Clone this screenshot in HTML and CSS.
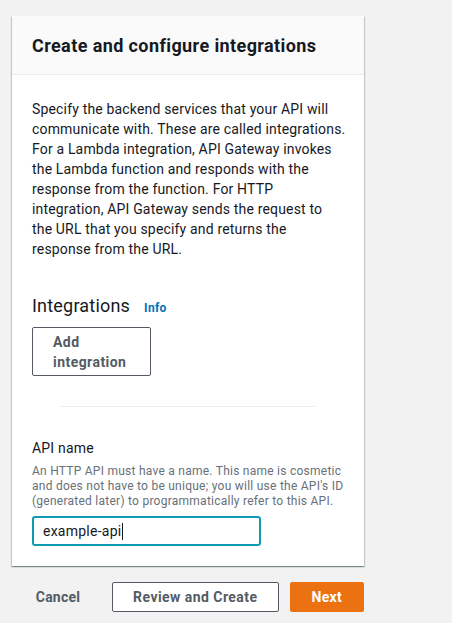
FILE: index.html
```html
<!DOCTYPE html>
<html>
<head>
<meta charset="utf-8">
<link rel="stylesheet" href="styles.css">
</head>
<body>
<div class="page">
  <div class="card">
    <div class="card-header">
      <h2 class="title">Create and configure integrations</h2>
    </div>
    <div class="card-body">
      <p class="intro">Specify the backend services that your API will communicate with. These are called integrations. For a Lambda integration, API Gateway invokes the Lambda function and responds with the response from the function. For HTTP integration, API Gateway sends the request to the URL that you specify and returns the response from the URL.</p>
      <div class="section-head">
        <span class="section-title">Integrations</span>
        <a class="info">Info</a>
      </div>
      <button class="btn-outline add">Add<br>integration</button>
      <hr class="divider">
      <div class="field">
        <div class="label">API name</div>
        <div class="desc">An HTTP API must have a name. This name is cosmetic and does not have to be unique; you will use the API's ID (generated later) to programmatically refer to this API.</div>
        <div class="input"><span class="value">example-api</span><span class="caret"></span></div>
      </div>
    </div>
  </div>
  <div class="actions">
    <button class="btn-link">Cancel</button>
    <button class="btn-outline">Review and Create</button>
    <button class="btn-primary">Next</button>
  </div>
</div>
</body>
</html>
```
FILE: styles.css
```css
html, body {
  margin: 0;
  padding: 0;
  background: #f2f2f2;
}
body {
  font-family: Roboto, "Liberation Sans", sans-serif;
  color: #16191f;
}
.page {
  padding: 16px 0 0 12px;
  width: 352px;
}
.card {
  background: #fff;
  box-shadow: 0 1px 1px rgba(0, 28, 36, 0.3), 1px 1px 1px rgba(0, 28, 36, 0.15), -1px 1px 1px rgba(0, 28, 36, 0.15);
}
.card-header {
  background: #fafafa;
  border-bottom: 1px solid #eaeded;
  padding: 15px 20px 13px;
}
.title {
  margin: 0;
  font-size: 18px;
  line-height: 30px;
  font-weight: 700;
  letter-spacing: 0.4px;
}
.card-body {
  padding: 24px 20px 20px;
}
.intro {
  margin: 0 -2px 0 0;
  font-size: 14px;
  line-height: 20px;
  letter-spacing: 0.17px;
}
.section-head {
  margin-top: 35px;
  display: flex;
  align-items: baseline;
  gap: 14px;
  line-height: 24px;
}
.section-title {
  font-size: 18px;
  letter-spacing: 0.2px;
}
.info {
  font-size: 12px;
  font-weight: 700;
  color: #0073bb;
  letter-spacing: 0.3px;
}
button {
  font-family: inherit;
  cursor: pointer;
}
.btn-outline {
  background: #fff;
  border: 1px solid #545b64;
  border-radius: 2px;
  color: #545b64;
  font-size: 14px;
  font-weight: 700;
  line-height: 20px;
  padding: 4px 20px;
  text-align: left;
  letter-spacing: 0.45px;
}
.add {
  display: block;
  margin-top: 7px;
  width: 119px;
  padding: 4px 20px 3px;
}
.divider {
  border: 0;
  border-top: 1px solid #eaeded;
  margin: 30px 29px 0 28px;
}
.field {
  margin-top: 30px;
}
.label {
  font-size: 14px;
  line-height: 20px;
  letter-spacing: 0.2px;
  padding-top: 1px;
}
.desc {
  margin: 6px -6px 0 0;
  font-size: 12px;
  line-height: 15px;
  color: #687078;
  letter-spacing: 0.25px;
}
.input {
  margin-top: 7px;
  width: 229px;
  height: 30px;
  box-sizing: border-box;
  border: 2px solid #0f9bb2;
  border-radius: 3px;
  padding: 0 9px;
  display: flex;
  align-items: center;
  font-size: 14px;
  letter-spacing: 0.25px;
}
.caret {
  display: inline-block;
  width: 1px;
  height: 17px;
  background: #16191f;
  margin-left: 1px;
}
.actions {
  margin-top: 16px;
  display: flex;
  justify-content: flex-end;
  align-items: center;
  gap: 11px;
}
.btn-link {
  background: none;
  border: 1px solid transparent;
  color: #545b64;
  font-size: 14px;
  font-weight: 700;
  line-height: 20px;
  padding: 4px 20px;
  letter-spacing: 0.2px;
}
.btn-primary {
  background: #ec7211;
  border: 1px solid #ec7211;
  border-radius: 2px;
  color: #fff;
  font-size: 14px;
  font-weight: 700;
  line-height: 20px;
  padding: 4px 21px;
  letter-spacing: 0.3px;
}
```
